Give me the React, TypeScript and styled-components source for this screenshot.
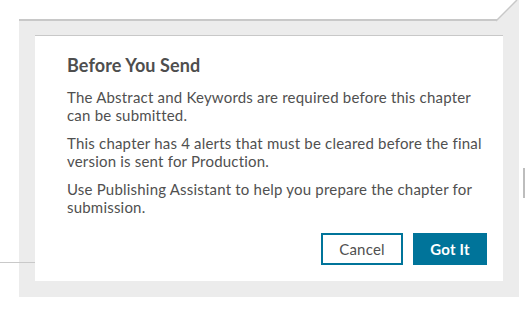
import React from "react";
import styled, { createGlobalStyle } from "styled-components";

const GlobalStyle = createGlobalStyle`
  html, body {
    margin: 0;
    padding: 0;
    background: #ffffff;
  }
  body {
    font-family: "Lato", "Noto Sans", sans-serif;
    -webkit-font-smoothing: antialiased;
  }
  * { box-sizing: border-box; }
`;

const Page = styled.div`
  position: relative;
  width: 525px;
  height: 312px;
  padding: 19px 6px 15px 19px;
  overflow: hidden;
`;

const BackdropRule = styled.div`
  position: absolute;
  left: 0;
  top: 262px;
  width: 35px;
  height: 1px;
  background: #c9c9c9;
  z-index: 2;
`;

const EdgeMark = styled.div`
  position: absolute;
  right: 0;
  top: 168px;
  width: 2px;
  height: 30px;
  background: #bdbdbd;
`;

const Popover = styled.div`
  position: relative;
  width: 500px;
  height: 278px;
  background: #ececec;
  border-top: 2px solid #c8c8c8;
  padding: 14px 16px 16px 16px;
`;

const Arrow = styled.svg`
  position: absolute;
  right: 0;
  top: -21px;
  width: 23px;
  height: 21px;
  overflow: visible;
`;

const Card = styled.section`
  display: flex;
  flex-direction: column;
  height: 246px;
  background: #ffffff;
  border-top: 1px solid #c8c8c8;
  padding: 17px 16px 16px 32px;
`;

const Title = styled.h2`
  margin: 0 0 11px 0;
  font-size: 18px;
  line-height: 24px;
  font-weight: 700;
  letter-spacing: 0.1px;
  color: #4e4e4e;
`;

const Text = styled.p`
  margin: 0 0 10px 0;
  font-size: 15px;
  line-height: 18px;
  font-weight: 400;
  letter-spacing: 0.2px;
  color: #505050;
`;

const Actions = styled.div`
  display: flex;
  justify-content: flex-end;
  gap: 10px;
  margin-top: auto;
`;

const Button = styled.button<{ $primary?: boolean }>`
  height: 32px;
  width: ${(p) => (p.$primary ? "74px" : "82px")};
  padding: 0;
  font-family: "Lato", "Noto Sans", sans-serif;
  font-size: 15px;
  letter-spacing: 0.2px;
  font-weight: ${(p) => (p.$primary ? 700 : 400)};
  color: ${(p) => (p.$primary ? "#ffffff" : "#505050")};
  background: ${(p) => (p.$primary ? "#00749a" : "#ffffff")};
  border: 2px solid #00749a;
  border-radius: 0;
  cursor: pointer;
`;

export default function App() {
  return (
    <>
      <GlobalStyle />
      <Page>
        <BackdropRule />
        <EdgeMark />
        <Popover>
          <Arrow viewBox="0 0 23 21" aria-hidden="true">
            <polygon points="0,21 21,0 23,0 23,21" fill="#ececec" />
            <line x1="0" y1="21" x2="21" y2="0" stroke="#c8c8c8" strokeWidth="1.5" />
          </Arrow>
          <Card>
            <Title>Before You Send</Title>
            <Text>The Abstract and Keywords are required before this chapter can be submitted.</Text>
            <Text>This chapter has 4 alerts that must be cleared before the final version is sent for Production.</Text>
            <Text>Use Publishing Assistant to help you prepare the chapter for submission.</Text>
            <Actions>
              <Button>Cancel</Button>
              <Button $primary>Got It</Button>
            </Actions>
          </Card>
        </Popover>
      </Page>
    </>
  );
}
